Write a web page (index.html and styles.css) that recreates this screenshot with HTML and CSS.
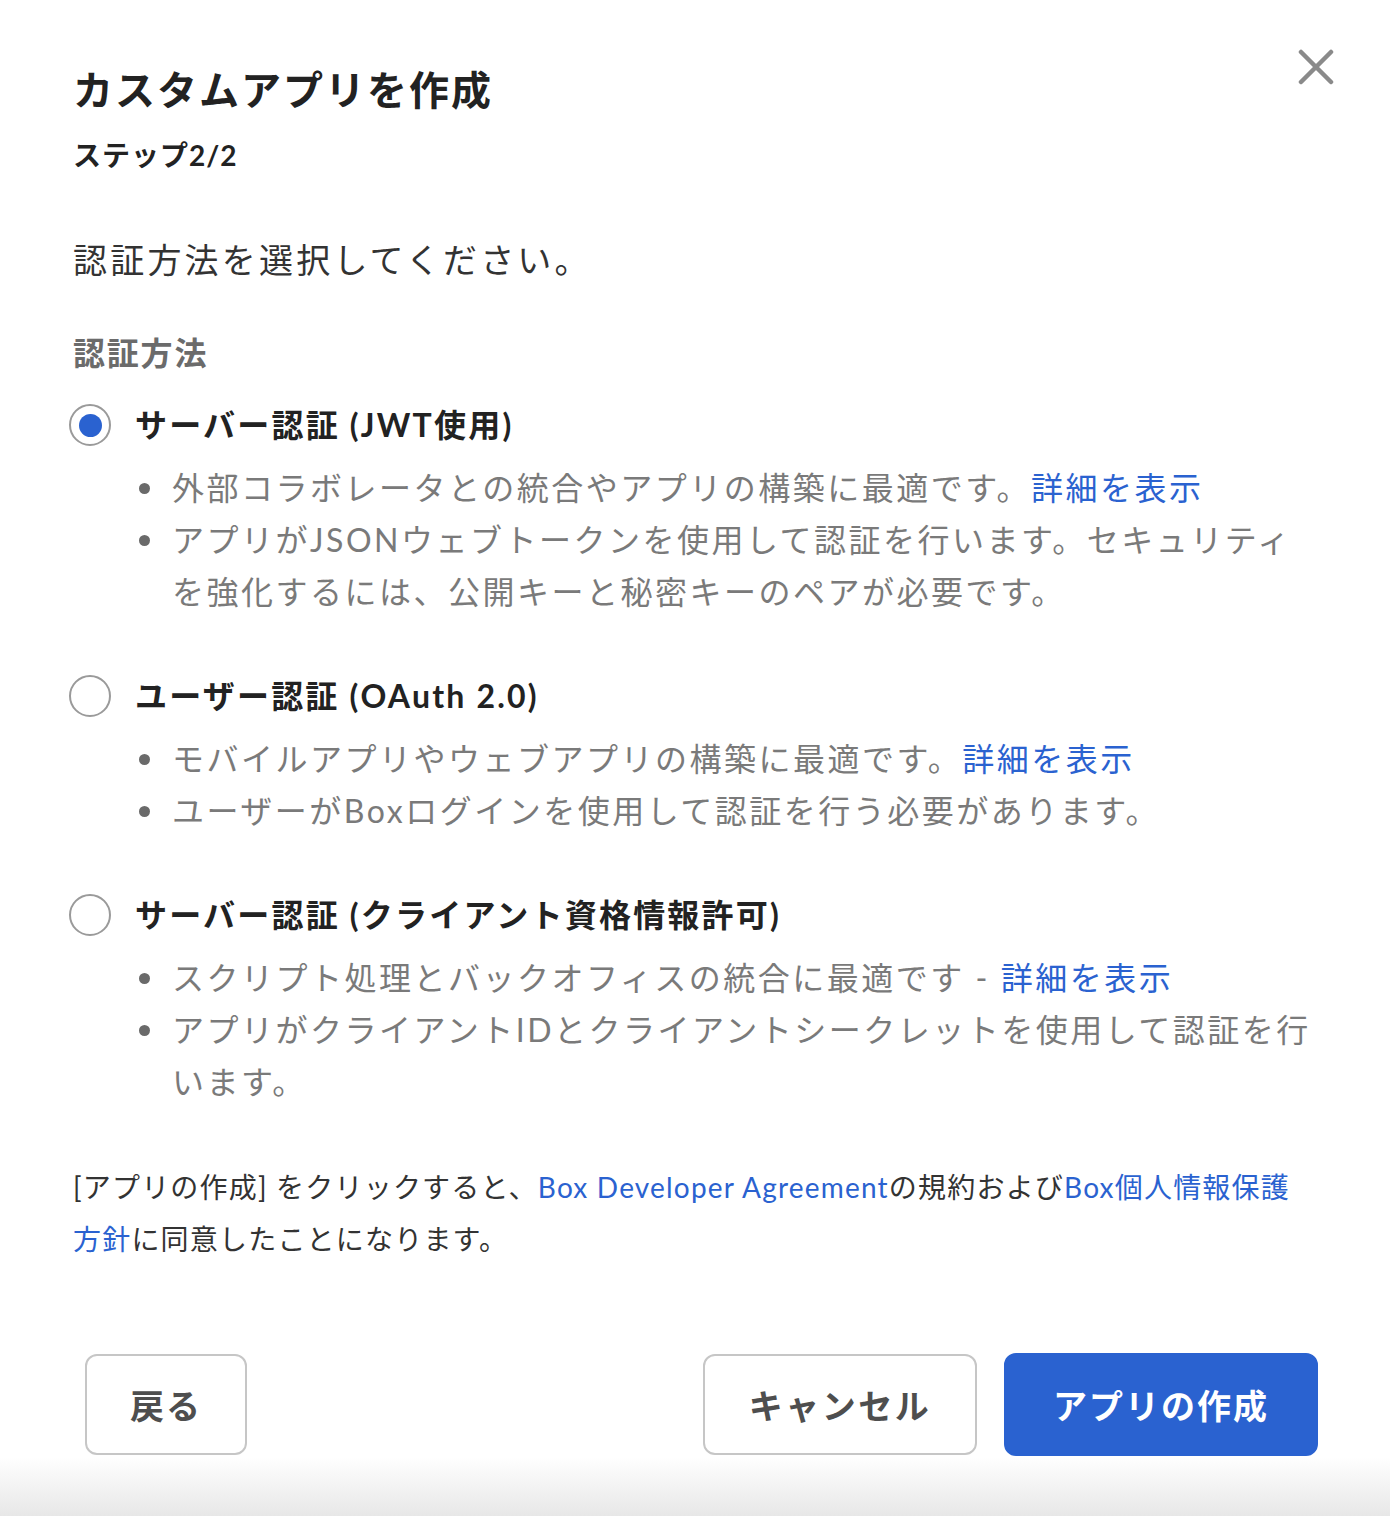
FILE: index.html
```html
<!DOCTYPE html>
<html lang="ja">
<head>
	<meta charset="UTF-8">
	<title>カスタムアプリを作成</title>
	<link rel="stylesheet" href="styles.css">
</head>
<body>
	<div class="modal">
		<button class="close" type="button" aria-label="閉じる">
			<svg width="36" height="36" viewBox="0 0 36 36"><path d="M3 3L33 33M33 3L3 33" stroke="#8a8a8a" stroke-width="4.5" stroke-linecap="round"/></svg>
		</button>
		<h1>カスタムアプリを作成</h1>
		<div class="step">ステップ2/2</div>
		<p class="prompt">認証方法を選択してください。</p>
		<div class="label">認証方法</div>

		<div class="option">
			<label class="option-head"><span class="radio checked"></span>サーバー認証 (JWT使用)</label>
			<ul>
				<li>外部コラボレータとの統合やアプリの構築に最適です。<a href="#">詳細を表示</a></li>
				<li>アプリがJSONウェブトークンを使用して認証を行います。セキュリティを強化するには、公開キーと秘密キーのペアが必要です。</li>
			</ul>
		</div>

		<div class="option">
			<label class="option-head"><span class="radio"></span>ユーザー認証 (OAuth 2.0)</label>
			<ul>
				<li>モバイルアプリやウェブアプリの構築に最適です。<a href="#">詳細を表示</a></li>
				<li>ユーザーがBoxログインを使用して認証を行う必要があります。</li>
			</ul>
		</div>

		<div class="option">
			<label class="option-head"><span class="radio"></span>サーバー認証 (クライアント資格情報許可)</label>
			<ul>
				<li>スクリプト処理とバックオフィスの統合に最適です - <a href="#">詳細を表示</a></li>
				<li>アプリがクライアントIDとクライアントシークレットを使用して認証を行います。</li>
			</ul>
		</div>

		<p class="agree">[アプリの作成] をクリックすると、<a href="#">Box Developer Agreement</a>の規約および<a href="#">Box個人情報保護方針</a>に同意したことになります。</p>

		<div class="footer">
			<button type="button" class="btn back">戻る</button>
			<div class="right">
				<button type="button" class="btn cancel">キャンセル</button>
				<button type="button" class="btn primary">アプリの作成</button>
			</div>
		</div>
	</div>
	<div class="shade"></div>
</body>
</html>
```

FILE: styles.css
```css
body {
	margin: 0;
	background-color: #fff;
	font-family: Lato, "Noto Sans CJK JP", sans-serif;
	color: #222;
}
.modal {
	position: relative;
	padding: 66px 72px 0 73px;
}
.close {
	position: absolute;
	top: 49px;
	right: 56px;
	border: none;
	background: none;
	padding: 0;
	cursor: pointer;
}
.close svg {
	display: block;
}
h1 {
	margin: 0;
	font-size: 40px;
	line-height: 48px;
	font-weight: 700;
	letter-spacing: 2px;
	color: #222;
}
.step {
	margin-top: 23px;
	font-size: 28px;
	line-height: 36px;
	font-weight: 700;
	letter-spacing: 1px;
	color: #222;
}
.prompt {
	margin: 61px 0 0;
	font-size: 34px;
	line-height: 52px;
	letter-spacing: 3.2px;
	color: #333;
}
.label {
	margin-top: 41px;
	font-size: 32px;
	line-height: 52px;
	font-weight: 700;
	letter-spacing: 1.8px;
	color: #6b6b6b;
}
.option {
	margin-top: 20px;
}
.option + .option {
	margin-top: 52px;
}
.option-head {
	display: flex;
	align-items: center;
	font-size: 32px;
	line-height: 52px;
	font-weight: 700;
	letter-spacing: 2.2px;
	color: #222;
	margin-left: -4px;
}
.radio {
	box-sizing: border-box;
	width: 42px;
	height: 42px;
	border: 2px solid #9a9a9a;
	border-radius: 50%;
	margin-right: 24px;
	display: flex;
	align-items: center;
	justify-content: center;
	flex-shrink: 0;
}
.radio.checked::after {
	content: "";
	width: 23px;
	height: 23px;
	border-radius: 50%;
	background-color: #2a62d0;
}
ul {
	margin: 11px 0 0;
	padding: 0 0 0 99px;
	list-style: none;
}
li {
	position: relative;
	font-size: 32px;
	line-height: 52px;
	letter-spacing: 2.5px;
	color: #7a7a7a;
}
li::before {
	content: "";
	position: absolute;
	left: -33px;
	top: 21px;
	width: 11px;
	height: 11px;
	border-radius: 50%;
	background-color: #6a6a6a;
}
a {
	color: #2a62d0;
	text-decoration: none;
}
.agree {
	margin: 53px 0 0;
	font-size: 28px;
	line-height: 52px;
	letter-spacing: 1.2px;
	color: #333;
}
.footer {
	margin-top: 89px;
	display: flex;
	justify-content: space-between;
	padding-left: 12px;
}
.right {
	display: flex;
	gap: 27px;
}
.btn {
	box-sizing: border-box;
	height: 101px;
	padding: 0;
	border: 2px solid #c6c6c6;
	border-radius: 12px;
	background-color: #fff;
	font-family: Lato, "Noto Sans CJK JP", sans-serif;
	font-size: 34px;
	font-weight: 700;
	letter-spacing: 2px;
	color: #4e4e4e;
	cursor: pointer;
}
.back {
	width: 162px;
}
.cancel {
	width: 274px;
	letter-spacing: 2.5px;
}
.primary {
	width: 314px;
	height: 103px;
	margin-top: -1px;
	border-color: #2a62d0;
	background-color: #2a62d0;
	color: #fff;
}
.shade {
	height: 62px;
	margin-top: 1px;
	background: linear-gradient(#fff, #e6e6e6);
}
```
